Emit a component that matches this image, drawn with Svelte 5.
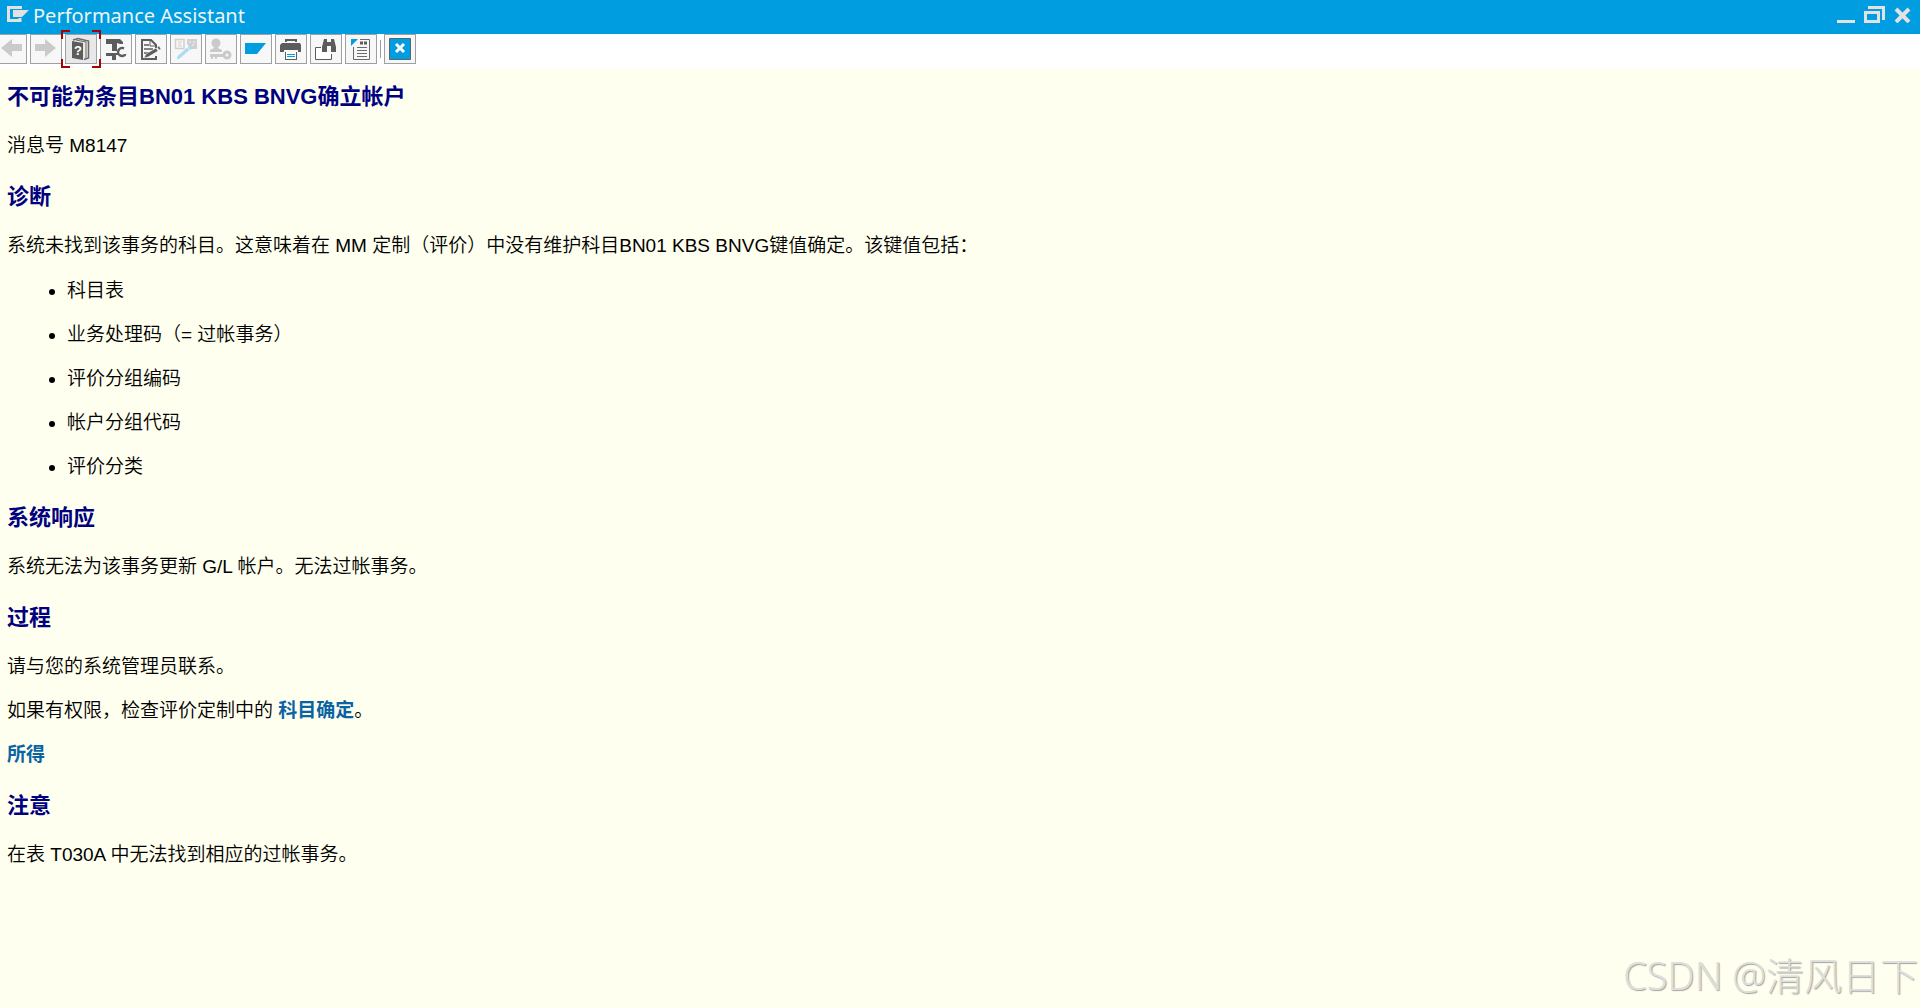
<script>
  const criteria = ['科目表', '业务处理码（= 过帐事务）', '评价分组编码', '帐户分组代码', '评价分类'];
</script>

<div class="window" lang="zh-CN">
  <header class="titlebar">
    <svg class="app-icon" viewBox="0 0 22 17" aria-hidden="true">
      <path d="M15 1.5H1.5V14.5H13V12" fill="none" stroke="#e2e2e2" stroke-width="3" />
      <path d="M6 4H22L15 11H6z" fill="#e2e2e2" />
    </svg>
    <span class="title">Performance Assistant</span>
    <div class="controls">
      <button type="button" aria-label="Minimize">
        <svg viewBox="0 0 18 18"><path d="M0 15H18V18H0z" /></svg>
      </button>
      <button type="button" aria-label="Restore" class="wide">
        <svg viewBox="0 0 21 18">
          <path d="M4 1H21V15H18V4H4z" />
          <path d="M0 6H16V18H0zM3 9V15H13V9z" fill-rule="evenodd" />
        </svg>
      </button>
      <button type="button" aria-label="Close">
        <svg viewBox="0 0 18 18"><path d="M2 4L15 17M15 4L2 17" fill="none" stroke="#e2e2e2" stroke-width="4" /></svg>
      </button>
    </div>
  </header>

  <div class="toolbar" role="toolbar" aria-label="Performance Assistant">
    <button type="button" class="tool cut" aria-label="Back">
      <svg viewBox="5 1 26 28"><path d="M27 10H17V5L6 14L17 23V17H27z" fill="#cacaca" /></svg>
    </button>
    <button type="button" class="tool" aria-label="Forward">
      <svg viewBox="1 1 30 28"><path d="M5 10H15V5L26 14L15 23V17H5z" fill="#cacaca" /></svg>
    </button>
    <button type="button" class="tool active" aria-label="Application Help">
      <svg viewBox="1 1 30 28">
        <path d="M7 7L18 9V26L7 24z" fill="#5c5c5c" />
        <path d="M8 6L13 4.500L23.500 7V24L19 25.500" fill="none" stroke="#6a6a6a" stroke-width="1.500" />
        <path d="M11 6L21 8V24" fill="none" stroke="#6a6a6a" stroke-width="1" />
        <text x="13" y="21" text-anchor="middle" fill="#fff">?</text>
      </svg>
      <svg class="focus" viewBox="0 0 40 38" aria-hidden="true">
        <path d="M1 9V1H9M31 1H39V9M39 29V37H31M9 37H1V29" fill="none" stroke="#a80000" stroke-width="2" />
      </svg>
    </button>
    <button type="button" class="tool" aria-label="Customizing">
      <svg viewBox="1 1 30 28">
        <path d="M6 5H20L23 8V10H20L17 9V17H12V10H6z" fill="#5c5c5c" />
        <path d="M6 19H19V21H16V26H12V22H6z" fill="#5c5c5c" />
        <path d="M24 14.500A4 4 0 1 0 25.500 20" fill="none" stroke="#5c5c5c" stroke-width="2.500" />
        <path d="M22 17H26V20H22z" fill="#f7f7f7" />
      </svg>
    </button>
    <button type="button" class="tool" aria-label="Edit Document">
      <svg viewBox="1 1 30 28">
        <path d="M21 14V11L16 6H7V25H21V22" fill="none" stroke="#5c5c5c" stroke-width="2" />
        <path d="M15 6V12H21" fill="none" stroke="#5c5c5c" stroke-width="1" />
        <path d="M9 11H14M9 15H18M9 19H14" stroke="#5c5c5c" stroke-width="1.500" />
        <path d="M9 24L11 20L21 14L23 17L13 23zM22 13L24 12L26 15L24 16z" fill="#5c5c5c" stroke="#f7f7f7" stroke-width="0.500" />
      </svg>
    </button>
    <button type="button" class="tool" aria-label="Translate">
      <svg viewBox="1 1 30 28">
        <path d="M5.500 5.500H14V14.500H5.500z" fill="none" stroke="#d0d0d0" stroke-width="1.500" />
        <path d="M8 8H12M8 10H11M8 12H12" stroke="#d0d0d0" stroke-width="1" />
        <path d="M17 5H27V15H21L17 10z" fill="#d0d0d0" />
        <path d="M19 8H21M23 8H25M22 11H24" stroke="#f7f7f7" stroke-width="1" />
        <path d="M7 25L8 22L17 14L19 16L10 24zM18 13L19 12L22 14L20 16z" fill="#a9dcf3" stroke="#a9dcf3" stroke-width="0.500" />
      </svg>
    </button>
    <button type="button" class="tool" aria-label="User Authorization">
      <svg viewBox="1 1 30 28">
        <circle cx="11" cy="9" r="4.500" fill="#cacaca" />
        <path d="M9 12H13V14L17 16V18H5V16L9 14z" fill="#cacaca" />
        <path d="M5 20H18V23H12V25H10V23H8V25H6V23H5z" fill="#cacaca" />
        <circle cx="22" cy="21" r="3" fill="none" stroke="#cacaca" stroke-width="3" />
      </svg>
    </button>
    <button type="button" class="tool" aria-label="Technical Information">
      <svg viewBox="1 1 30 28"><path d="M5 9H26L17 20H5z" fill="#009de0" /></svg>
    </button>
    <button type="button" class="tool" aria-label="Print">
      <svg viewBox="1 1 30 28">
        <path d="M10 8V5H22V8H20V7H12V8z" fill="#5c5c5c" />
        <path d="M7 9H25L26 11V18H23V16H9V18H5V11z" fill="#5c5c5c" />
        <path d="M10.500 18V25.500H21.500V18" fill="#fff" stroke="#5c5c5c" stroke-width="1" />
        <path d="M12 20.500H20M12 22.500H20" stroke="#009de0" stroke-width="1" />
        <path d="M10 25.500H22" stroke="#5c5c5c" stroke-width="1" />
      </svg>
    </button>
    <button type="button" class="tool" aria-label="Find">
      <svg viewBox="1 1 30 28">
        <path d="M11 13.500H5.500V25.500H21.500V20" fill="#fff" stroke="#5c5c5c" stroke-width="1" />
        <path d="M14 5H17V8H21V5H24L26 13V18H21V12H17V18H12V13z" fill="#5c5c5c" />
      </svg>
    </button>
    <button type="button" class="tool" aria-label="Document List">
      <svg viewBox="1 1 30 28">
        <path d="M6 5H13L6 12z" fill="#009de0" />
        <path d="M15 5.500H24.500V25.500H8.500V13" fill="none" stroke="#6a6a6a" stroke-width="1" />
        <path d="M15 9H18M19 9H22" stroke="#5c5c5c" stroke-width="3" />
        <path d="M12 13.500H22M12 16.500H22M12 19.500H22M12 22.500H22" stroke="#6a6a6a" stroke-width="1" />
      </svg>
    </button>
    <span class="separator"></span>
    <button type="button" class="tool" aria-label="Exit">
      <svg viewBox="1 1 30 28">
        <path d="M5.500 4.500H26.500V25.500H5.500z" fill="#009de0" stroke="#56656e" stroke-width="1" />
        <path d="M12 10L20 18M20 10L12 18" stroke="#fff" stroke-width="3" />
      </svg>
    </button>
  </div>

  <main class="document">
    <h1>不可能为条目BN01 KBS BNVG确立帐户</h1>
    <p>消息号 M8147</p>

    <h2>诊断</h2>
    <p>系统未找到该事务的科目。这意味着在 MM 定制（评价）中没有维护科目BN01 KBS BNVG键值确定。该键值包括：</p>
    <ul>
      {#each criteria as item}
        <li>{item}</li>
      {/each}
    </ul>

    <h2>系统响应</h2>
    <p>系统无法为该事务更新 G/L 帐户。无法过帐事务。</p>

    <h2>过程</h2>
    <p>请与您的系统管理员联系。</p>
    <p>如果有权限，检查评价定制中的 <a href="#determination">科目确定</a>。</p>
    <p><a href="#proceed">所得</a></p>

    <h2>注意</h2>
    <p>在表 T030A 中无法找到相应的过帐事务。</p>
  </main>

  <div class="watermark">CSDN @清风日下</div>
</div>

<style>
  :global(body) {
    margin: 0;
    background: #feffee;
  }

  .window {
    display: flex;
    flex-direction: column;
    min-height: 100vh;
    position: relative;
    color: #000;
    font-family: 'Liberation Sans', 'Noto Sans CJK SC', sans-serif;
    font-size: 19px;
    line-height: 24px;
  }

  .titlebar {
    display: flex;
    align-items: center;
    height: 34px;
    padding: 0 8px 0 7px;
    background: #009de0;
    color: #f0f4f6;
  }

  .app-icon {
    width: 22px;
    height: 17px;
    margin: 0 4px 6px 0;
  }

  .title {
    flex: 1;
    font-family: 'Noto Sans', sans-serif;
    font-size: 20px;
    padding-bottom: 2px;
  }

  .controls {
    display: flex;
    gap: 9px;
    padding-bottom: 6px;
  }

  .controls button {
    width: 18px;
    height: 18px;
    padding: 0;
    border: 0;
    background: none;
  }

  .controls .wide {
    width: 21px;
  }

  .controls svg {
    display: block;
    width: 100%;
    height: 100%;
    fill: #e2e2e2;
  }

  .toolbar {
    display: flex;
    align-items: flex-start;
    gap: 3px;
    height: 34px;
    background: #fff;
  }

  .tool {
    position: relative;
    flex: none;
    box-sizing: border-box;
    width: 32px;
    height: 30px;
    padding: 0;
    border: 1px solid #a0a0a0;
    background: #f7f7f7;
  }

  .tool svg {
    display: block;
    width: 100%;
    height: 100%;
  }

  .tool.cut {
    width: 27px;
    border-left: 0;
  }

  .tool.active {
    background: #e8e8e8;
  }

  .tool text {
    font: bold 13px 'Liberation Sans', sans-serif;
  }

  .tool .focus {
    position: absolute;
    top: -5px;
    left: -5px;
    width: 40px;
    height: 38px;
    z-index: 1;
  }

  .separator {
    width: 1px;
    height: 18px;
    margin-top: 6px;
    background: #9a9a9a;
  }

  .document {
    flex: 1;
    padding: 15px 7px;
    background: #feffee;
    font-weight: 350;
  }

  h1,
  h2 {
    margin: 25px 0 23px;
    color: #000080;
    font-size: 22px;
    font-weight: 700;
    line-height: 28px;
  }

  h1 {
    margin-top: 0;
  }

  p,
  li {
    margin: 0 0 20px;
  }

  ul {
    margin: 0;
    padding: 1px 0 0 60px;
  }

  p:has(+ h2),
  li:last-child {
    margin-bottom: 0;
  }

  a {
    color: #0a64a4;
    font-weight: 700;
    text-decoration: none;
  }

  .watermark {
    position: absolute;
    right: 2px;
    bottom: 8px;
    color: #dededc;
    font-family: 'Noto Sans', 'Noto Sans CJK SC', sans-serif;
    font-size: 38px;
    font-weight: 300;
    line-height: 50px;
    text-shadow: 1px 1px 1px #a4a4a0;
  }
</style>
